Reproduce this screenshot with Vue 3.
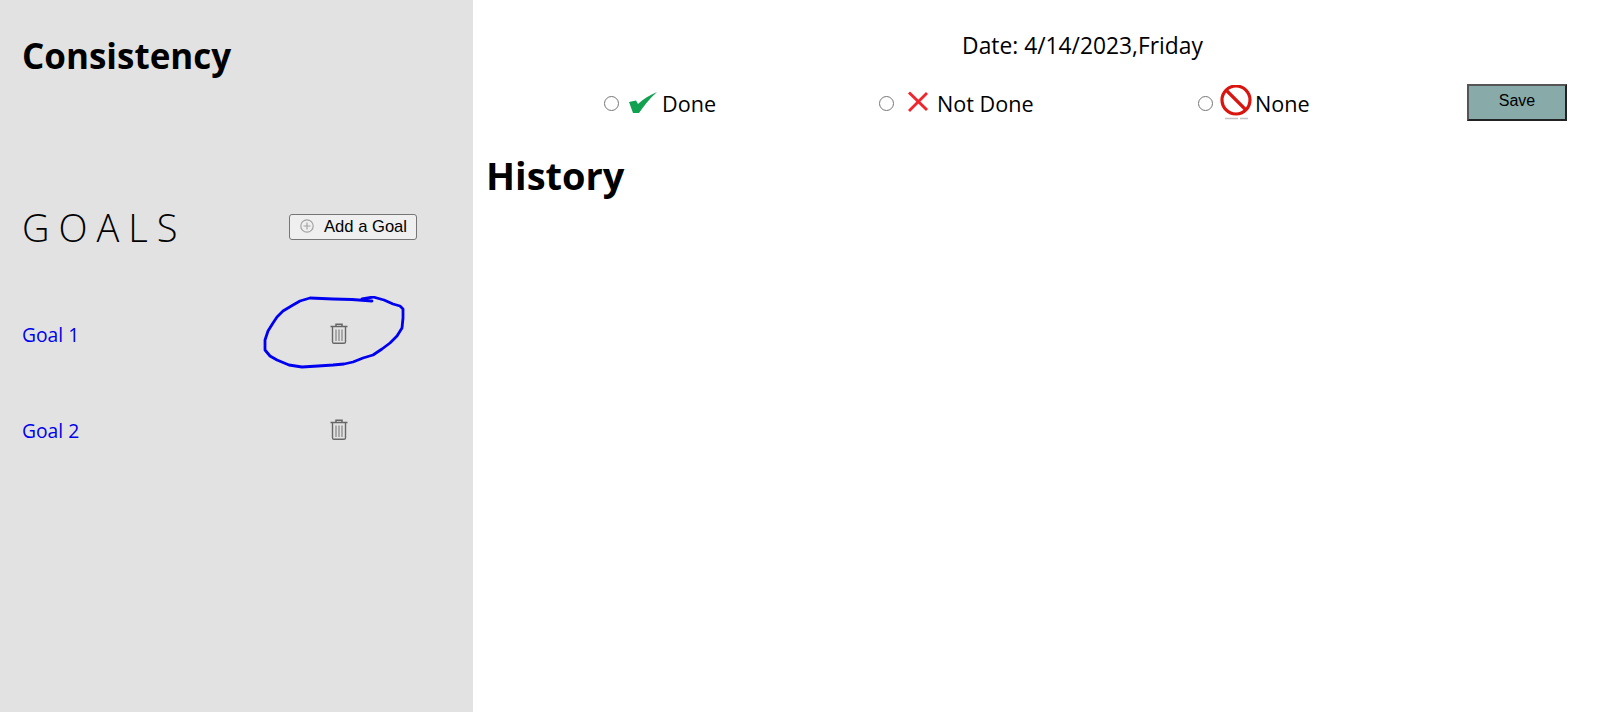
<template>
  <div class="page">
    <aside class="sidebar">
      <h1 class="brand">Consistency</h1>
      <div class="goals-head">
        <h2>GOALS</h2>
        <button class="add-btn">
          <svg width="16" height="16" viewBox="0 0 16 16" fill="none" stroke="#a3a3a3">
            <circle cx="8" cy="8" r="6.2" stroke-width="1.2" />
            <path d="M8 4.5v7M4.5 8h7" stroke-width="1.2" />
          </svg>
          <span>Add a Goal</span>
        </button>
      </div>
      <ul class="goal-list">
        <li v-for="goal in goals" :key="goal" class="goal">
          <a href="#">{{ goal }}</a>
          <svg class="trash" width="18" height="21" viewBox="0 0 18 21" fill="none" stroke="#666">
            <path d="M.5 3.5h17M6 3.5V1.2h6v2.3" stroke-width="1.5" />
            <path d="M2.5 4v14.7q0 1.6 1.6 1.6h9.8q1.6 0 1.6-1.6V4" stroke-width="1.4" />
            <path d="M6 6.5v11.5M9 6.5v11.5M12 6.5v11.5" stroke-width="1.1" stroke="#7a7a7a" />
          </svg>
        </li>
      </ul>
      <svg class="scribble" width="150" height="80" viewBox="0 0 150 80" fill="none">
        <path
          d="M110 5 L90 3.5 L71 3 L48 2 L38 5 L31 9 L21 15 L15 21 L11 27 L6 35 L3 44 L3 54 L8 60 L15 64 L27 69 L40 71 L56 70 L71 69 L82 68 L91 66 L101 62 L111 59 L120 53 L128 47 L135 40 L140 32 L141 22 L141 13 L138 10 L131 8 L122 4 L111 1 L100 3"
          stroke="#0000f0" stroke-width="2.8" stroke-linecap="round" stroke-linejoin="round" />
      </svg>
    </aside>
    <main class="content">
      <p class="date">Date: 4/14/2023,Friday</p>
      <form class="status-row" @submit.prevent>
        <label class="status done">
          <input type="radio" name="status" />
          <svg width="30" height="24" viewBox="0 0 30 24">
            <path d="M1 11 L8 9.5 L10 13 C15 8 22 4 29 1 C21 8 16 15 11 22 L5 22 Z" fill="#12a150" />
          </svg>
          <span>Done</span>
        </label>
        <label class="status not-done">
          <input type="radio" name="status" />
          <svg width="22" height="22" viewBox="0 0 22 22" fill="none" stroke="#f0262c">
            <path d="M2 1.5 L20 19" stroke-width="3" />
            <path d="M20 2 L2 20" stroke-width="2.8" />
          </svg>
          <span>Not Done</span>
        </label>
        <label class="status none">
          <input type="radio" name="status" />
          <svg width="32" height="36" viewBox="0 0 32 36" fill="none">
            <circle cx="16" cy="15" r="14" stroke="#d8160f" stroke-width="3.2" />
            <path d="M6 5 L26 25" stroke="#d8160f" stroke-width="3.2" />
            <path d="M5 33.5h13M20 33.5h8" stroke="#c4c4c4" stroke-width="1.4" />
          </svg>
          <span>None</span>
        </label>
        <button class="save-btn">Save</button>
      </form>
      <h1 class="history">History</h1>
    </main>
  </div>
</template>

<script setup>
const goals = ['Goal 1', 'Goal 2']
</script>

<style>
html,
body {
  margin: 0;
  background: #fff;
}
</style>

<style scoped>
.page {
  display: flex;
  height: 712px;
  font-family: "Open Sans", "Noto Sans", sans-serif;
  color: #000;
  overflow: hidden;
}

.sidebar {
  position: relative;
  width: 473px;
  flex-shrink: 0;
  box-sizing: border-box;
  padding: 0 22px;
  background: #e2e2e2;
}

.brand {
  margin: 30px 0 0;
  font-size: 35px;
  line-height: 52px;
  font-weight: 700;
}

.goals-head {
  display: flex;
  align-items: center;
  margin-top: 120px;
  height: 50px;
}

.goals-head h2 {
  width: 267px;
  margin: 0;
  font-size: 38px;
  font-weight: 300;
  letter-spacing: 9px;
}

.add-btn {
  display: flex;
  align-items: center;
  gap: 9px;
  width: 128px;
  height: 26px;
  padding: 0 0 0 9px;
  box-sizing: border-box;
  background: #efefef;
  border: 1px solid #767676;
  border-radius: 3px;
  font-family: "Liberation Sans", sans-serif;
  font-size: 16.6px;
  color: #000;
}

.add-btn svg {
  margin-top: -3px;
}

.goal-list {
  list-style: none;
  margin: 34px 0 0;
  padding: 0;
}

.goal {
  display: flex;
  align-items: center;
  height: 96px;
}

.goal a {
  width: 308px;
  color: #0000ee;
  font-size: 19.3px;
  text-decoration: none;
}

.trash {
  margin-top: -2px;
}

.scribble {
  position: absolute;
  left: 262px;
  top: 296px;
}

.content {
  flex: 1;
  padding: 0 13px;
}

.date {
  margin: 30px 0 0;
  padding-left: 86px;
  text-align: center;
  font-size: 22.8px;
  line-height: 32px;
}

.status-row {
  display: flex;
  align-items: center;
  height: 42px;
  margin-top: 20px;
  padding-left: 118px;
}

.status {
  display: flex;
  align-items: center;
  gap: 6px;
  font-size: 21.6px;
}

.status input {
  width: 15px;
  height: 15px;
  margin: 1px 0 0;
}

.done {
  width: 275px;
}

.done svg {
  margin: 0 -2px 0 3px;
}

.not-done {
  width: 319px;
}

.not-done svg {
  margin: 0 2px 2px 7px;
}

.none {
  width: 269px;
}

.none svg {
  margin: 0 -3px 0 1px;
}

.save-btn {
  width: 100px;
  height: 37px;
  margin-bottom: 2px;
  padding: 0 0 2px;
  background: #88abaa;
  border: 2px solid;
  border-color: #555 #222 #222 #555;
  font-family: "Liberation Sans", sans-serif;
  font-size: 16px;
  color: #000;
}

.history {
  margin: 23px 0 0;
  font-size: 38px;
  line-height: 56px;
  font-weight: 700;
}
</style>
